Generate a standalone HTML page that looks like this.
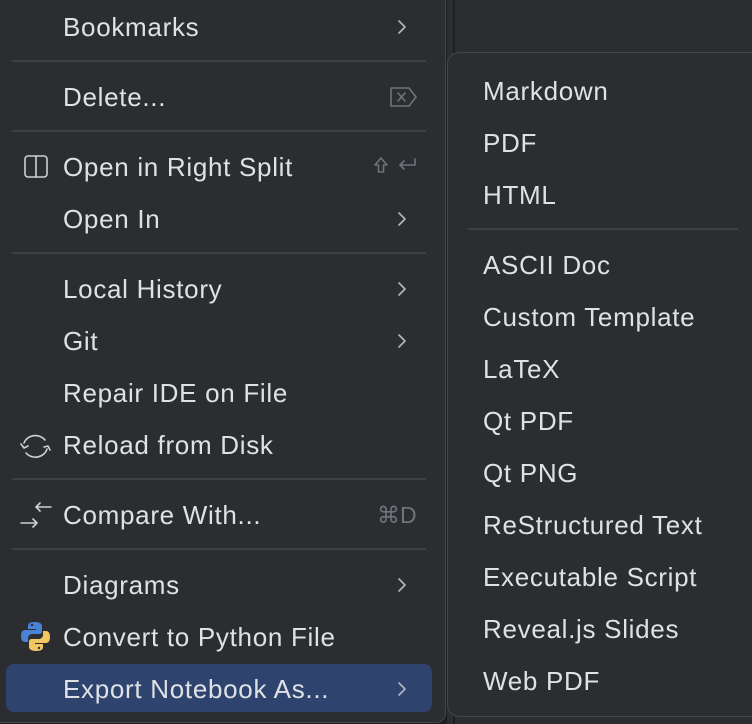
<!DOCTYPE html>
<html><head><meta charset="utf-8"><style>
html,body{margin:0;padding:0;}
body{width:752px;height:724px;background:#1e1f22;position:relative;overflow:hidden;font-family:"Liberation Sans",sans-serif;}
.menu{position:absolute;left:-10px;top:-10px;width:456px;height:733px;background:#2b2d30;border:1px solid #43454a;border-radius:10px;box-sizing:border-box;}
.bg2{position:absolute;left:447px;top:0;width:305px;height:724px;background:#2b2d30;}
.vl{position:absolute;left:453px;top:0;width:2px;height:724px;background:#1e1f22;}
.sub{position:absolute;left:447px;top:52px;width:320px;height:665px;background:#2b2d30;border:1px solid #43454a;border-radius:12px;box-sizing:border-box;}
.t{position:absolute;font-size:26px;letter-spacing:0.7px;color:#dfe1e5;line-height:30px;white-space:nowrap;}
.sep{position:absolute;height:2px;background:#3e4045;}
.sc{position:absolute;color:#6f737a;font-size:23px;line-height:30px;}
.hl{position:absolute;left:6px;top:664px;width:426px;height:48px;background:#2e436e;border-radius:8px;}
</style></head><body>
<div class="bg2"></div><div class="vl"></div>
<div class="menu"></div>
<div class="hl"></div>
<div class="sep" style="left:12px;top:60px;width:414px"></div>
<div class="sep" style="left:12px;top:130px;width:414px"></div>
<div class="sep" style="left:12px;top:252px;width:414px"></div>
<div class="sep" style="left:12px;top:478px;width:414px"></div>
<div class="sep" style="left:12px;top:548px;width:414px"></div>

<div class="t" style="left:63px;top:12px">Bookmarks</div>
<div class="t" style="left:63px;top:82px">Delete...</div>
<div class="t" style="left:63px;top:152px">Open in Right Split</div>
<div class="t" style="left:63px;top:204px">Open In</div>
<div class="t" style="left:63px;top:274px">Local History</div>
<div class="t" style="left:63px;top:326px">Git</div>
<div class="t" style="left:63px;top:378px">Repair IDE on File</div>
<div class="t" style="left:63px;top:430px">Reload from Disk</div>
<div class="t" style="left:63px;top:500px">Compare With...</div>
<div class="t" style="left:63px;top:570px">Diagrams</div>
<div class="t" style="left:63px;top:622px">Convert to Python File</div>
<div class="t" style="left:63px;top:674px">Export Notebook As...</div>

<svg width="752" height="724" style="position:absolute;left:0;top:0" fill="none" stroke-linecap="round" stroke-linejoin="round">
<g stroke="#b4b8bf" stroke-width="1.6">
<path d="M399 21l6 6-6 6"/><path d="M399 213l6 6-6 6"/><path d="M399 283l6 6-6 6"/><path d="M399 335l6 6-6 6"/><path d="M399 579l6 6-6 6"/><path d="M399 683l6 6-6 6"/>
</g>
<g stroke="#6f737a" stroke-width="1.6">
<path d="M391 88h18l7 9-7 9h-18z"/><path d="M398 93l7 8M405 93l-7 8"/>
<path d="M381 158l-6 7h3.5v7h5v-7h3.5z"/><path d="M415 159v6h-15M404 161l-4 4 4 4"/>
</g>
<g stroke="#ced0d6" stroke-width="1.6">
<rect x="25" y="156" width="22" height="21" rx="3"/><path d="M36 156v21"/>
<path d="M24 443a12 11 0 0 1 21-3M47 449a12 11 0 0 1-21 4"/>
<path d="M21 444l3 4 4-2M50 450l-2-4-4 1"/>
<path d="M36 507h15M40 503l-4 4 4 4M21 523h15M33 519l4 4-4 4"/>
</g>
<path d="M35 622c-6 0-7 2-7 4v3h8v1h-11c-3 0-4 3-4 6s1 6 4 6h3v-4c0-2 2-4 4-4h7c2 0 3-1 3-3v-5c0-2-2-4-7-4z" fill="#4a82d6"/>
<path d="M36 651c6 0 7-2 7-4v-3h-8v-1h11c3 0 4-3 4-6s-1-6-4-6h-3v4c0 2-2 4-4 4h-7c-2 0-3 1-3 3v5c0 2 2 4 7 4z" fill="#f1c764"/>
<circle cx="32" cy="625" r="1.2" fill="#2b2d30"/><circle cx="39" cy="648" r="1.2" fill="#2b2d30"/>
</svg>
<div class="sc" style="left:377px;top:500px">⌘D</div>

<div class="sub"></div>
<div class="sep" style="left:468px;top:228px;width:270px"></div>
<div class="t" style="left:483px;top:76px">Markdown</div>
<div class="t" style="left:483px;top:128px">PDF</div>
<div class="t" style="left:483px;top:180px">HTML</div>
<div class="t" style="left:483px;top:250px">ASCII Doc</div>
<div class="t" style="left:483px;top:302px">Custom Template</div>
<div class="t" style="left:483px;top:354px">LaTeX</div>
<div class="t" style="left:483px;top:406px">Qt PDF</div>
<div class="t" style="left:483px;top:458px">Qt PNG</div>
<div class="t" style="left:483px;top:510px">ReStructured Text</div>
<div class="t" style="left:483px;top:562px">Executable Script</div>
<div class="t" style="left:483px;top:614px">Reveal.js Slides</div>
<div class="t" style="left:483px;top:666px">Web PDF</div>
</body></html>
